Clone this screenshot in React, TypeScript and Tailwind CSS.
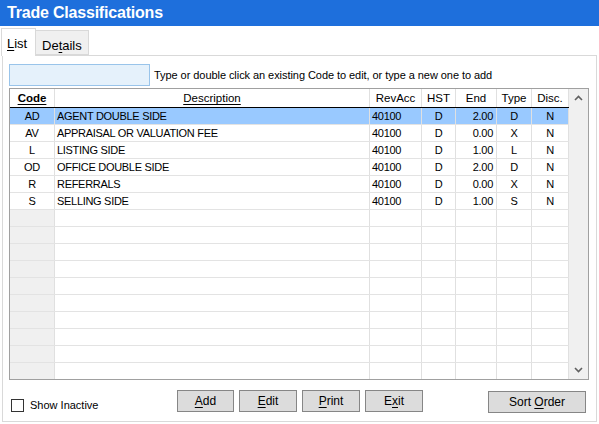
import React from "react";

const rows = [
    { code: "AD", desc: "AGENT DOUBLE SIDE", rev: "40100", hst: "D", end: "2.00", type: "D", disc: "N" },
    { code: "AV", desc: "APPRAISAL OR VALUATION FEE", rev: "40100", hst: "D", end: "0.00", type: "X", disc: "N" },
    { code: "L", desc: "LISTING SIDE", rev: "40100", hst: "D", end: "1.00", type: "L", disc: "N" },
    { code: "OD", desc: "OFFICE DOUBLE SIDE", rev: "40100", hst: "D", end: "2.00", type: "D", disc: "N" },
    { code: "R", desc: "REFERRALS", rev: "40100", hst: "D", end: "0.00", type: "X", disc: "N" },
    { code: "S", desc: "SELLING SIDE", rev: "40100", hst: "D", end: "1.00", type: "S", disc: "N" },
];

const TOTAL_ROWS = 16;

function Btn({ pre, u, post, w }: { pre?: string; u: string; post?: string; w: string }) {
    return (
        <button className={`${w} h-[22px] bg-[#dcdcdc] border border-[#868686] text-[12px] text-black leading-none`}>
            {pre}
            <span className="underline underline-offset-2">{u}</span>
            {post}
        </button>
    );
}

export default function App() {
    const blanks = TOTAL_ROWS - rows.length;

    return (
        <div className="w-[599px] h-[424px] bg-white overflow-hidden text-black" style={{ fontFamily: '"Liberation Sans", Arial, sans-serif' }}>
            {/* title bar */}
            <div className="h-[26px] bg-[#1e6fdc] text-white font-bold text-[16px] tracking-[-0.2px] leading-[26px] pl-[7px]">
                Trade Classifications
            </div>

            {/* tabs */}
            <div className="flex items-end mt-[2px] pl-[1px] h-[27px] relative z-10">
                <div className="w-[35px] h-[28px] bg-white border-l border-t border-r border-[#d9d9d9] text-[13px] pl-[5px] pt-[5px] -mb-px">
                    <span className="underline underline-offset-2">L</span>ist
                </div>
                <div className="w-[53px] h-[25px] bg-[#f0f0f0] border border-[#d9d9d9] border-l-0 text-[13px] pl-[6px] pt-[5px]">
                    De<span className="underline underline-offset-2">t</span>ails
                </div>
            </div>

            {/* panel */}
            <div className="ml-[2px] w-[595px] h-[367px] border border-[#d9d9d9] flex flex-col">
                <div className="flex items-center mt-[8px] ml-[6px]">
                    <div className="w-[141px] h-[22px] bg-[#e5f1fb] border border-[#99c4ea]" />
                    <span className="ml-[4px] text-[11px] tracking-[-0.06px]">
                        Type or double click an existing Code to edit, or type a new one to add
                    </span>
                </div>

                {/* grid */}
                <div className="mt-[2px] ml-[6px] w-[580px] h-[292px] border border-[#a0a0a0] flex overflow-hidden">
                    <div className="w-[559px] flex flex-col">
                        <div className="flex h-[19px] border-b border-black text-[11.5px] shrink-0">
                            <div className="w-[45px] border-r border-[#e0e0e0] text-center font-bold underline underline-offset-2 leading-[18px]">Code</div>
                            <div className="w-[315px] border-r border-[#e0e0e0] text-center underline underline-offset-2 leading-[18px]">Description</div>
                            <div className="w-[52px] border-r border-[#e0e0e0] text-center leading-[18px]">RevAcc</div>
                            <div className="w-[34px] border-r border-[#e0e0e0] text-center leading-[18px]">HST</div>
                            <div className="w-[41px] border-r border-[#e0e0e0] text-center leading-[18px]">End</div>
                            <div className="w-[35px] border-r border-[#e0e0e0] text-center leading-[18px]">Type</div>
                            <div className="w-[37px] border-r border-[#e0e0e0] text-center leading-[18px]">Disc.</div>
                        </div>

                        {rows.map((r, i) => (
                            <div
                                key={r.code}
                                className={`flex h-[17px] border-b border-[#e3e3e3] text-[11px] tracking-[-0.3px] leading-[16px] shrink-0 ${i === 0 ? "bg-[#99c9ff]" : "bg-white"}`}
                            >
                                <div className="w-[45px] border-r border-[#e0e0e0] text-center">{r.code}</div>
                                <div className="w-[315px] border-r border-[#e0e0e0] pl-[2px]">{r.desc}</div>
                                <div className="w-[52px] border-r border-[#e0e0e0] pl-[2px]">{r.rev}</div>
                                <div className="w-[34px] border-r border-[#e0e0e0] text-center">{r.hst}</div>
                                <div className="w-[41px] border-r border-[#e0e0e0] text-right pr-[3px]">{r.end}</div>
                                <div className="w-[35px] border-r border-[#e0e0e0] text-center">{r.type}</div>
                                <div className="w-[37px] border-r border-[#e0e0e0] text-center">{r.disc}</div>
                            </div>
                        ))}

                        {Array.from({ length: blanks }).map((_, i) => (
                            <div key={i} className="flex h-[17px] border-b border-[#e3e3e3] shrink-0">
                                <div className="w-[45px] border-r border-[#e0e0e0] bg-[#f0f0f0]" />
                                <div className="w-[315px] border-r border-[#e0e0e0]" />
                                <div className="w-[52px] border-r border-[#e0e0e0]" />
                                <div className="w-[34px] border-r border-[#e0e0e0]" />
                                <div className="w-[41px] border-r border-[#e0e0e0]" />
                                <div className="w-[35px] border-r border-[#e0e0e0]" />
                                <div className="w-[37px] border-r border-[#e0e0e0]" />
                            </div>
                        ))}
                    </div>

                    {/* scrollbar */}
                    <div className="w-[19px] bg-[#f0f0f0] flex flex-col items-center justify-between py-[6px]">
                        <svg width="9" height="6" viewBox="0 0 9 6">
                            <path d="M1 5 L4.5 1.5 L8 5" fill="none" stroke="#606060" strokeWidth="1.6" />
                        </svg>
                        <svg width="9" height="6" viewBox="0 0 9 6">
                            <path d="M1 1 L4.5 4.5 L8 1" fill="none" stroke="#606060" strokeWidth="1.6" />
                        </svg>
                    </div>
                </div>

                {/* bottom bar */}
                <div className="flex items-center mt-[9px] ml-[8px]">
                    <div className="flex items-center w-[166px] pt-[8px]">
                        <div className="w-[13px] h-[13px] border border-[#333] bg-white" />
                        <span className="ml-[6px] text-[11px]">Show Inactive</span>
                    </div>
                    <div className="flex gap-[5px]">
                        <Btn u="A" post="dd" w="w-[57px]" />
                        <Btn u="E" post="dit" w="w-[58px]" />
                        <Btn u="P" post="rint" w="w-[58px]" />
                        <Btn pre="E" u="x" post="it" w="w-[58px]" />
                    </div>
                    <div className="ml-[65px]">
                        <Btn pre="Sort " u="O" post="rder" w="w-[98px]" />
                    </div>
                </div>
            </div>
        </div>
    );
}
